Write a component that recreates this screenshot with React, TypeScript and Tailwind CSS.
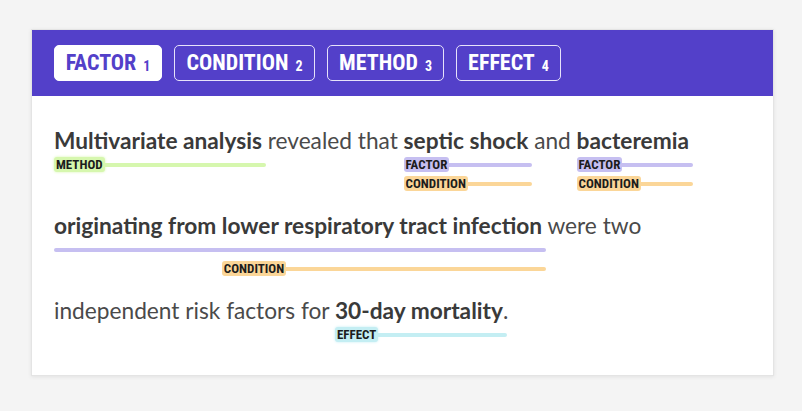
import React from 'react';

type Kind = 'factor' | 'condition' | 'method' | 'effect';

interface Lane {
  kind: Kind;
  label?: boolean;
  extend?: boolean;
  cont?: boolean; // continues from the segment before
  open?: boolean; // continues into the next segment
}

interface Seg {
  text: string;
  bold?: boolean;
  lanes?: (Lane | null)[];
}

const labelCls: Record<Kind, string> = {
  factor: 'bg-[#c6bff1]',
  condition: 'bg-[#fbd698]',
  method: 'bg-[#d6f7ae] shadow-[0_0_3px_#d6f7ae]',
  effect: 'bg-[#c4eef3] shadow-[0_0_3px_#c4eef3]',
};

const barCls: Record<Kind, string> = {
  factor: 'bg-[#c6bff1]',
  condition: 'bg-[#fbd698]',
  method: 'bg-[#d6f7ae]',
  effect: 'bg-[#c4eef3]',
};

const tabs = [
  { name: 'FACTOR', n: 1, w: 'w-[108px]', active: true },
  { name: 'CONDITION', n: 2, w: 'w-[141px]' },
  { name: 'METHOD', n: 3, w: 'w-[117px]' },
  { name: 'EFFECT', n: 4, w: 'w-[105px]' },
];

const lines: Seg[][] = [
  [
    { text: 'Multivariate analysis', bold: true, lanes: [{ kind: 'method', label: true, extend: true }] },
    { text: ' revealed that ' },
    { text: 'septic shock', bold: true, lanes: [{ kind: 'factor', label: true, extend: true }, { kind: 'condition', label: true, extend: true }] },
    { text: ' and ' },
    { text: 'bacteremia', bold: true, lanes: [{ kind: 'factor', label: true, extend: true }, { kind: 'condition', label: true, extend: true }] },
  ],
  [
    { text: 'originating from ', bold: true, lanes: [{ kind: 'factor', open: true }] },
    { text: 'lower respiratory tract infection', bold: true, lanes: [{ kind: 'factor', cont: true, extend: true }, { kind: 'condition', label: true, extend: true }] },
    { text: ' were two' },
  ],
  [
    { text: 'independent risk factors for ' },
    { text: '30-day mortality', bold: true, lanes: [{ kind: 'effect', label: true, extend: true }] },
    { text: '.' },
  ],
];

const tagFont = "font-['Roboto_Condensed','Liberation_Sans_Narrow','DejaVu_Sans_Condensed',Roboto,sans-serif]";

const LaneRow: React.FC<{ lane: Lane | null | undefined }> = ({ lane }) => {
  if (!lane) return <div className="h-[19px]" />;
  const round = `${lane.cont ? '' : 'rounded-l-full'} ${lane.open ? '' : 'rounded-r-full'}`;
  return (
    <div className={`h-[19px] flex items-center ${lane.extend ? 'mr-[-4px]' : ''}`}>
      {lane.label && (
        <span
          className={`relative z-10 rounded-[3px] px-[2px] h-[15px] flex items-center text-[13px] leading-none font-bold text-[#1c1c1c] ${tagFont} ${labelCls[lane.kind]}`}
        >
          {lane.kind.toUpperCase()}
        </span>
      )}
      <div className={`flex-1 h-[4px] ${round} ${lane.label ? '-ml-1' : ''} ${barCls[lane.kind]}`} />
    </div>
  );
};

export default function App() {
  return (
    <div className="w-[802px] h-[411px] bg-[#f4f4f4] pt-[29px] pl-[31px] font-['Lato',sans-serif]">
      <div className="w-[743px] h-[347px] bg-white border border-[#e4e4e4] shadow-[0_1px_4px_rgba(0,0,0,0.08)]">
        {/* tabs */}
        <div className="h-[66px] bg-[#5340c9] flex items-center gap-3 px-[22px]">
          {tabs.map(t => (
            <div
              key={t.name}
              className={`${t.w} h-[36px] flex items-end justify-center pb-[6px] rounded-[5px] border ${
                t.active ? 'bg-white border-white text-[#5340c9]' : 'border-[#e6e2fa] text-white'
              } ${tagFont} font-bold`}
            >
              <span className="text-[22px] leading-none">{t.name}</span>
              <span className="text-[14px] leading-none ml-[7px] mb-[1px]">{t.n}</span>
            </div>
          ))}
        </div>

        {/* annotated text */}
        <div className="pl-[22px] pt-[31px]">
          {lines.map((line, i) => (
            <div key={i} className="h-[85px] flex items-start">
              {line.map((s, j) => (
                <div key={j} className="flex flex-col">
                  <span
                    className={`whitespace-pre text-[22.7px] leading-[28px] ${
                      s.bold ? 'font-bold text-[#3a3a3a]' : 'text-[#4a4a4a]'
                    }`}
                  >
                    {s.text}
                  </span>
                  {s.lanes?.map((l, k) => <LaneRow key={k} lane={l} />)}
                </div>
              ))}
            </div>
          ))}
        </div>
      </div>
    </div>
  );
}
